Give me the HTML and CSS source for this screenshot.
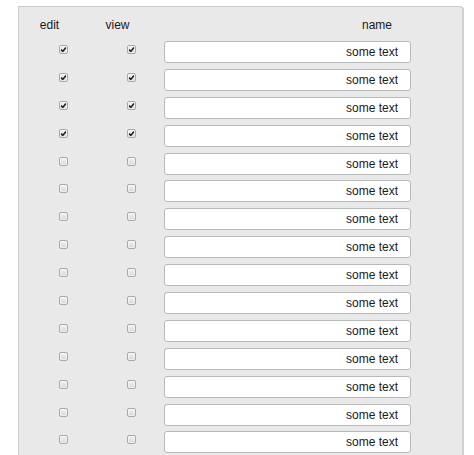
FILE: index.html
```html
<!DOCTYPE html>
<html>
<head>
<meta charset="utf-8">
<link rel="stylesheet" href="styles.css">
</head>
<body>
<div class="panel">
  <div class="grid head">
    <div class="th">edit</div>
    <div class="th">view</div>
    <div class="th name">name</div>
  </div>
  <div class="rows">
    <div class="grid row"><span class="cb checked"></span><span class="cb checked"></span><input class="txt" type="text" value="some text" readonly></div>
    <div class="grid row"><span class="cb checked"></span><span class="cb checked"></span><input class="txt" type="text" value="some text" readonly></div>
    <div class="grid row"><span class="cb checked"></span><span class="cb checked"></span><input class="txt" type="text" value="some text" readonly></div>
    <div class="grid row"><span class="cb checked"></span><span class="cb checked"></span><input class="txt" type="text" value="some text" readonly></div>
    <div class="grid row"><span class="cb"></span><span class="cb"></span><input class="txt" type="text" value="some text" readonly></div>
    <div class="grid row"><span class="cb"></span><span class="cb"></span><input class="txt" type="text" value="some text" readonly></div>
    <div class="grid row"><span class="cb"></span><span class="cb"></span><input class="txt" type="text" value="some text" readonly></div>
    <div class="grid row"><span class="cb"></span><span class="cb"></span><input class="txt" type="text" value="some text" readonly></div>
    <div class="grid row"><span class="cb"></span><span class="cb"></span><input class="txt" type="text" value="some text" readonly></div>
    <div class="grid row"><span class="cb"></span><span class="cb"></span><input class="txt" type="text" value="some text" readonly></div>
    <div class="grid row"><span class="cb"></span><span class="cb"></span><input class="txt" type="text" value="some text" readonly></div>
    <div class="grid row"><span class="cb"></span><span class="cb"></span><input class="txt" type="text" value="some text" readonly></div>
    <div class="grid row"><span class="cb"></span><span class="cb"></span><input class="txt" type="text" value="some text" readonly></div>
    <div class="grid row"><span class="cb"></span><span class="cb"></span><input class="txt" type="text" value="some text" readonly></div>
    <div class="grid row"><span class="cb"></span><span class="cb"></span><input class="txt" type="text" value="some text" readonly></div>
  </div>
</div>
</body>
</html>
```
FILE: styles.css
```css
html, body {
  margin: 0;
  padding: 0;
  background: #ffffff;
  overflow: hidden;
  height: 455px;
}
body {
  font-family: "Liberation Sans", Arial, sans-serif;
  font-size: 12px;
  color: #1a1a1a;
}
.panel {
  margin: 6px 10px 0 18px;
  background: #e9e9e9;
  border: 1px solid #cdcdcd;
  border-right: 2px solid #d2d2d2;
  border-bottom: none;
  border-radius: 0 4px 0 0;
  padding: 11px 0 0 0;
  height: 449px;
  box-sizing: border-box;
  overflow: hidden;
}
.grid {
  display: grid;
  grid-template-columns: 61px 75px 1fr;
  align-items: start;
}
.head {
  line-height: 14px;
}
.th {
  text-align: center;
}
.th.name {
  text-align: right;
  padding-right: 70px;
}
.rows {
  margin-top: 9px;
  display: flex;
  flex-direction: column;
  gap: 5.9px;
}
.row {
  height: 22px;
}
.cb {
  justify-self: center;
  margin-top: 4px;
  margin-left: 27px;
  width: 9px;
  height: 9px;
  box-sizing: border-box;
  border: 1px solid #a9a9a9;
  border-radius: 2px;
  background: linear-gradient(#f2f2f2, #d9d9d9);
  box-shadow: inset 0 0 0 1px rgba(255,255,255,0.5);
}
.cb.checked {
  background-image: url("data:image/svg+xml,%3Csvg xmlns='http://www.w3.org/2000/svg' viewBox='0 0 7 7'%3E%3Cpath d='M1 3.6 L2.8 5.4 L6 1.4' fill='none' stroke='%23222' stroke-width='1.6'/%3E%3C/svg%3E"), linear-gradient(#f2f2f2, #d9d9d9);
  background-size: 7px 7px, auto;
  background-repeat: no-repeat;
  background-position: center, center;
}
.txt {
  margin: 0 0 0 9px;
  width: 247px;
  height: 22px;
  box-sizing: border-box;
  border: 1px solid #b9b9b9;
  border-radius: 3px;
  background: #ffffff;
  font-family: "Liberation Sans", Arial, sans-serif;
  font-size: 12px;
  color: #1a1a1a;
  text-align: right;
  padding: 0 12px 0 4px;
  outline: none;
}
```
